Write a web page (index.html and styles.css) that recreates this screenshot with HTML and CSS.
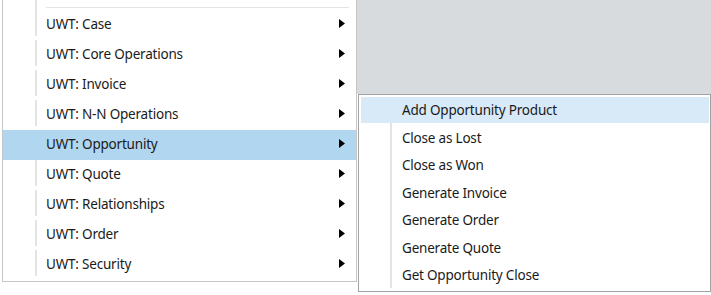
FILE: index.html
```html
<!DOCTYPE html>
<html lang="en">
<head>
    <meta charset="UTF-8">
    <title>Context menu</title>
    <link rel="stylesheet" href="styles.css">
</head>
<body>
    <div class="stage">
        <div class="backdrop">
            <div class="backdrop-left"></div>
            <div class="backdrop-right"></div>
        </div>

        <!-- main context menu -->
        <div class="menu main-menu">
            <div class="menu-sep"><span class="gutter"></span><span class="sep-line"></span></div>
            <div class="menu-item"><span class="gutter"></span><span class="label">UWT: Case</span><svg class="arrow" width="6" height="9" viewBox="0 0 6 9"><path d="M0 0 L6 4.5 L0 9 Z"/></svg></div>
            <div class="menu-item"><span class="gutter"></span><span class="label">UWT: Core Operations</span><svg class="arrow" width="6" height="9" viewBox="0 0 6 9"><path d="M0 0 L6 4.5 L0 9 Z"/></svg></div>
            <div class="menu-item"><span class="gutter"></span><span class="label">UWT: Invoice</span><svg class="arrow" width="6" height="9" viewBox="0 0 6 9"><path d="M0 0 L6 4.5 L0 9 Z"/></svg></div>
            <div class="menu-item"><span class="gutter"></span><span class="label">UWT: N-N Operations</span><svg class="arrow" width="6" height="9" viewBox="0 0 6 9"><path d="M0 0 L6 4.5 L0 9 Z"/></svg></div>
            <div class="menu-item active"><span class="gutter"></span><span class="label">UWT: Opportunity</span><svg class="arrow" width="6" height="9" viewBox="0 0 6 9"><path d="M0 0 L6 4.5 L0 9 Z"/></svg></div>
            <div class="menu-item"><span class="gutter"></span><span class="label">UWT: Quote</span><svg class="arrow" width="6" height="9" viewBox="0 0 6 9"><path d="M0 0 L6 4.5 L0 9 Z"/></svg></div>
            <div class="menu-item"><span class="gutter"></span><span class="label">UWT: Relationships</span><svg class="arrow" width="6" height="9" viewBox="0 0 6 9"><path d="M0 0 L6 4.5 L0 9 Z"/></svg></div>
            <div class="menu-item"><span class="gutter"></span><span class="label">UWT: Order</span><svg class="arrow" width="6" height="9" viewBox="0 0 6 9"><path d="M0 0 L6 4.5 L0 9 Z"/></svg></div>
            <div class="menu-item"><span class="gutter"></span><span class="label">UWT: Security</span><svg class="arrow" width="6" height="9" viewBox="0 0 6 9"><path d="M0 0 L6 4.5 L0 9 Z"/></svg></div>
        </div>

        <!-- opportunity submenu -->
        <div class="menu sub-menu">
            <div class="sub-item hover"><span class="gutter"></span><span class="label">Add Opportunity Product</span></div>
            <div class="sub-item"><span class="gutter"></span><span class="label">Close as Lost</span></div>
            <div class="sub-item"><span class="gutter"></span><span class="label">Close as Won</span></div>
            <div class="sub-item"><span class="gutter"></span><span class="label">Generate Invoice</span></div>
            <div class="sub-item"><span class="gutter"></span><span class="label">Generate Order</span></div>
            <div class="sub-item"><span class="gutter"></span><span class="label">Generate Quote</span></div>
            <div class="sub-item"><span class="gutter"></span><span class="label">Get Opportunity Close</span></div>
        </div>
    </div>
</body>
</html>
```

FILE: styles.css
```css
body {
    margin: 0;
    font-family: 'Noto Sans', 'Open Sans', sans-serif;
    font-size: 13.5px;
    letter-spacing: -0.2px;
    color: #1a1a1a;
    background-color: #ffffff;
}
.stage {
    position: relative;
    width: 711px;
    height: 295px;
    overflow: hidden;
}

/* app window behind the menus */
.backdrop {
    display: flex;
    height: 94px;
}
.backdrop-left {
    width: 356px;
}
.backdrop-right {
    flex: 1;
    background-color: #d8dbde;
}

.menu {
    position: absolute;
    background-color: #ffffff;
    box-sizing: border-box;
}
.gutter {
    flex-shrink: 0;
    align-self: stretch;
}
.label {
    white-space: nowrap;
}

/* main menu */
.main-menu {
    left: 2px;
    top: 0;
    width: 355px;
    padding-bottom: 1px;
    border-left: 1px solid #c6c6c6;
    border-right: 1px solid #c6c6c6;
    border-bottom: 1px solid #c6c6c6;
}
.menu-sep {
    display: flex;
    height: 10px;
}
.menu-sep .gutter {
    width: 32px;
    border-right: 2px solid #e3e3e3;
}
.sep-line {
    flex: 1;
    margin: 7px 7px 0 9px;
    height: 1px;
    background-color: #e3e3e3;
}
.menu-item {
    display: flex;
    align-items: center;
    height: 30px;
}
.menu-item .gutter {
    width: 32px;
    margin-bottom: 4px;
    border-right: 2px solid #e3e3e3;
}
.menu-item .label {
    flex: 1;
    padding-left: 9px;
    margin-top: -3px;
}
.arrow {
    margin-right: 11px;
    margin-top: -4px;
    fill: #000000;
}
.menu-item.active {
    background-color: #b1d6f0;
}
.menu-item.active .gutter {
    border-right-color: transparent;
}

/* submenu */
.sub-menu {
    left: 358px;
    top: 94px;
    width: 353px;
    height: 198px;
    padding: 2px 1px 0 2px;
    border: 1px solid #a3a3a3;
}
.sub-item {
    display: flex;
    align-items: center;
    height: 27.5px;
}
.sub-item .gutter {
    width: 29px;
    border-right: 2px solid #e3e3e3;
}
.sub-item .label {
    padding-left: 10px;
    margin-top: 2px;
}
.sub-item.hover {
    height: 26px;
    background-color: #d8eaf8;
}
.sub-item.hover .label {
    margin-top: 0;
}
.sub-item.hover .gutter {
    border-right-color: transparent;
}
```
